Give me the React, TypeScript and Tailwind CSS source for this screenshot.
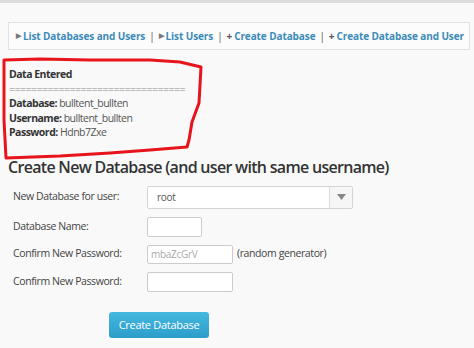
import React from "react";

const font = { fontFamily: '"Open Sans", "Noto Sans", sans-serif' };

function Row({ label, children }: { label: string; children: React.ReactNode }) {
  return (
    <div className="flex items-center">
      <div className="w-[134px] text-[10.5px] tracking-[-0.4px] text-[#444]">{label}</div>
      {children}
    </div>
  );
}

export default function App() {
  return (
    <div className="relative w-[474px] h-[348px] overflow-hidden bg-[#f9f9f9]" style={font}>
      <div className="h-[3px] bg-[#dcdcdc]" />
      <div className="pt-[19px] pl-[8px] pr-[4px]">
        <div className="flex items-center h-[28px] border border-[#e2e2e2] bg-[#fcfcfc] pl-[7px] text-[10px] font-bold tracking-[-0.1px] text-[#3b8bb8] whitespace-nowrap">
          <span className="text-[7px] text-[#777] mr-[2px]">▶</span>
          <span>List Databases and Users</span>
          <span className="mx-[4px] text-[#555] font-normal">|</span>
          <span className="text-[7px] text-[#777] mr-[2px]">▶</span>
          <span>List Users</span>
          <span className="mx-[4px] text-[#555] font-normal">|</span>
          <span className="text-[#555] mr-[2px]">+</span>
          <span>Create Database</span>
          <span className="mx-[4px] text-[#555] font-normal">|</span>
          <span className="text-[#555] mr-[2px]">+</span>
          <span>Create Database and User</span>
        </div>
      </div>

      <div className="pl-[9px] pt-[17px] text-[10.5px] leading-[14.5px] tracking-[-0.5px] text-[#333]">
        <div className="font-bold">Data Entered</div>
        <div className="text-[#888] tracking-[-0.5px]">================================</div>
        <div><span className="font-bold">Database:</span> <span className="text-[#555]">bulltent_bullten</span></div>
        <div><span className="font-bold">Username:</span> <span className="text-[#555]">bulltent_bullten</span></div>
        <div><span className="font-bold">Password:</span> <span className="text-[#555]">Hdnb7Zxe</span></div>
      </div>

      <h1 className="pl-[8px] pt-[17px] text-[16px] font-semibold tracking-[-0.7px] text-[#333] leading-[20px]">
        Create New Database (and user with same username)
      </h1>

      <div className="pl-[13px] pt-[9px] flex flex-col gap-[8px]">
        <Row label="New Database for user:">
          <div className="flex items-center w-[206px] h-[23px] border border-[#d4d4d4] rounded-[2px] bg-white">
            <span className="flex-1 pl-[9px] text-[10px] tracking-[-0.3px] text-[#555]">root</span>
            <span className="flex items-center justify-center w-[23px] h-full border-l border-[#ddd] bg-[#f6f6f6]">
              <svg width="9" height="6" viewBox="0 0 9 6"><path d="M0 0h9L4.5 6z" fill="#888" /></svg>
            </span>
          </div>
        </Row>
        <Row label="Database Name:">
          <div className="w-[55px] h-[20px] border border-[#ccc] rounded-[2px] bg-white" />
        </Row>
        <Row label="Confirm New Password:">
          <div className="flex items-center w-[86px] h-[19px] border border-[#ccc] rounded-[2px] bg-white pl-[3px] text-[10px] tracking-[-0.3px] text-[#aaa]">mbaZcGrV</div>
          <span className="ml-[4px] text-[10.5px] tracking-[-0.4px] text-[#444]">(random generator)</span>
        </Row>
        <Row label="Confirm New Password:">
          <div className="w-[86px] h-[20px] border border-[#ccc] rounded-[2px] bg-white" />
        </Row>
      </div>

      <div className="pl-[109px] pt-[19px]">
        <button className="w-[100px] h-[26px] rounded-[3px] bg-gradient-to-b from-[#45b8e0] to-[#2a9dca] text-white text-[11px] tracking-[-0.3px]">
          Create Database
        </button>
      </div>

      <svg className="absolute left-0 top-0 pointer-events-none" width="474" height="348">
        <path
          d="M4 60 L40 59 L90 60 L150 60 L180 62 L201 67 L200 85 L199 103 L192 122 L189 140 L187 147 L150 150 L110 153 L60 156 L6 158 L4 120 L4 60 Z"
          fill="none"
          stroke="#e8141b"
          strokeWidth="3"
          strokeLinejoin="round"
        />
      </svg>
    </div>
  );
}
